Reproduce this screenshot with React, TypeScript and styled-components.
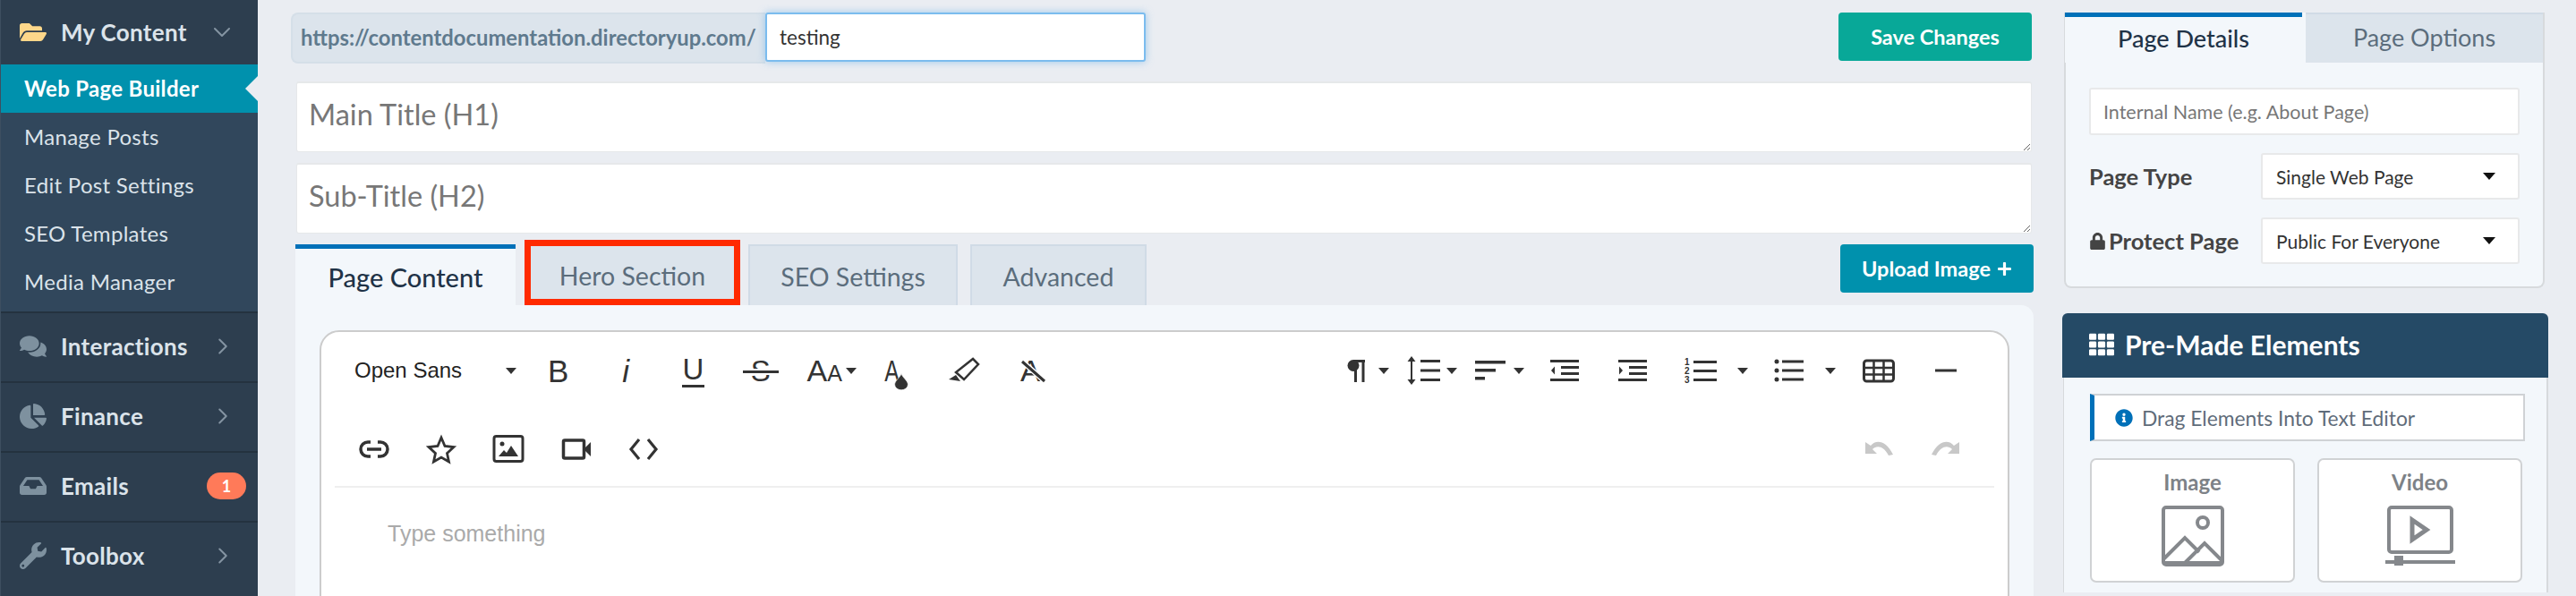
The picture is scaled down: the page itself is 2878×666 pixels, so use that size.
import React from "react";
import styled, { createGlobalStyle } from "styled-components";
import {
  FaChartPie,
  FaComments,
  FaFolderOpen,
  FaInbox,
  FaInfoCircle,
  FaLock,
  FaPlus,
  FaTh,
  FaWrench,
} from "react-icons/fa";
import { ChevronDown, ChevronRight } from "lucide-react";

const GlobalStyle = createGlobalStyle`
  html, body {
    margin: 0;
    padding: 0;
    height: 666px;
    overflow: hidden;
    background: #eaedf2;
  }
  * {
    box-sizing: border-box;
  }
`;

const UI = `"Lato", "Open Sans", sans-serif`;
const EDITOR = `"Liberation Sans", Arial, sans-serif`;

const App = () => {
  return (
    <>
      <GlobalStyle />
      <Page>
        <Sidebar>
          <NavHead>
            <NavIcon $open><FaFolderOpen /></NavIcon>
            <NavLabel>My Content</NavLabel>
            <NavChevron><ChevronDown size={32} strokeWidth={1.5} /></NavChevron>
          </NavHead>
          <SubNav>
            <SubItem $active>Web Page Builder</SubItem>
            <SubItem>Manage Posts</SubItem>
            <SubItem>Edit Post Settings</SubItem>
            <SubItem>SEO Templates</SubItem>
            <SubItem>Media Manager</SubItem>
          </SubNav>
          {navItems.map((item) => (
            <NavItem key={item.label}>
              <NavIcon>{item.icon}</NavIcon>
              <NavLabel>{item.label}</NavLabel>
              {item.badge ? (
                <Badge>{item.badge}</Badge>
              ) : (
                <NavChevron><ChevronRight size={30} strokeWidth={1.6} /></NavChevron>
              )}
            </NavItem>
          ))}
        </Sidebar>

        <Center>
          <TopRow>
            <UrlGroup>
              <UrlPrefix>https://contentdocumentation.directoryup.com/</UrlPrefix>
              <UrlInput value="testing" readOnly />
            </UrlGroup>
            <SaveButton>Save Changes</SaveButton>
          </TopRow>
          <TitleArea placeholder="Main Title (H1)" />
          <TitleArea placeholder="Sub-Title (H2)" />
          <TabRow>
            <Tab $active $w={246}>Page Content</Tab>
            <Tab $marked $w={241}>Hero Section</Tab>
            <Tab $w={234}>SEO Settings</Tab>
            <Tab $w={197}>Advanced</Tab>
            <UploadButton>Upload Image <FaPlus size={17} /></UploadButton>
          </TabRow>
          <ContentPanel>
            <Editor>
              <Toolbar>
                <ToolRow>
                  <FontPicker>
                    <span>Open Sans</span>
                    <Caret />
                  </FontPicker>
                  <ToolBtn><LetterB>B</LetterB></ToolBtn>
                  <ToolBtn><LetterI>i</LetterI></ToolBtn>
                  <ToolBtn><LetterU>U</LetterU></ToolBtn>
                  <ToolBtn><LetterS>S</LetterS></ToolBtn>
                  <ToolBtn $pad={14}>
                    <SizeGlyph>A<small>A</small></SizeGlyph>
                    <Caret $gap={4} />
                  </ToolBtn>
                  <ToolBtn>
                    <ColorGlyph>
                      <span>A</span>
                      <svg width="16" height="19" viewBox="0 0 15 18">
                        <path d="M7.500 0.500 C9 5 14.500 8 14.500 12 A7 5.800 0 0 1 0.500 12 C0.500 8 6 5 7.500 0.500Z" fill="#333" stroke="#fff" strokeWidth="0.600" />
                      </svg>
                    </ColorGlyph>
                  </ToolBtn>
                  <ToolBtn>
                    <Icon>
                      <path d="M29 7 L35 13 L19 30 L10 22Z" fill="none" stroke="#333" strokeWidth="2.500" />
                      <path d="M2 30 L10 25 L15 32Z" fill="#333" />
                    </Icon>
                  </ToolBtn>
                  <ToolBtn>
                    <ClearGlyph>
                      A
                      <svg width="30" height="32" viewBox="0 0 30 32">
                        <path d="M0 3 L26 26" stroke="#fff" strokeWidth="6" />
                        <path d="M2 5 L27 27" stroke="#333" strokeWidth="3" />
                      </svg>
                    </ClearGlyph>
                  </ToolBtn>
                  <Spacer />
                  <ToolBtn $pad={12}>
                    <Icon>
                      <circle cx="16" cy="14.500" r="6.500" fill="#333" />
                      <path d="M16 8 H29 V11 H16Z M17 8 H20 V33 H17Z M25.500 8 H28.500 V33 H25.500Z" fill="#333" />
                    </Icon>
                    <Caret />
                  </ToolBtn>
                  <ToolBtn $pad={12}>
                    <Icon>
                      <path d="M4 8 H6 V32 H4Z" fill="#333" />
                      <path d="M5 4 L9.500 10 H0.500Z M5 36 L9.500 30 H0.500Z" fill="#333" />
                      <path d="M15 8 H37 V11 H15Z M15 18.500 H37 V21.500 H15Z M15 29 H37 V32 H15Z" fill="#333" />
                    </Icon>
                    <Caret />
                  </ToolBtn>
                  <ToolBtn $pad={12}>
                    <Icon><path d="M1 9 H35 V12.500 H1Z M1 18 H24 V21.500 H1Z M1 27 H12 V30.500 H1Z" fill="#333" /></Icon>
                    <Caret />
                  </ToolBtn>
                  <ToolBtn>
                    <Icon><path d="M2 8 H34 V11 H2Z M2 29 H34 V32 H2Z M14 15 H34 V18 H14Z M14 22 H34 V25 H14Z M7 15.500 V24.500 L3 20Z" fill="#333" /></Icon>
                  </ToolBtn>
                  <ToolBtn>
                    <Icon><path d="M2 8 H34 V11 H2Z M2 29 H34 V32 H2Z M14 15 H34 V18 H14Z M14 22 H34 V25 H14Z M3 15.500 V24.500 L7 20Z" fill="#333" /></Icon>
                  </ToolBtn>
                  <ToolBtn $w={100} $pad={20}>
                    <Icon>
                      <path d="M11 9 H37 V12 H11Z M11 19 H37 V22 H11Z M11 29 H37 V32 H11Z" fill="#333" />
                      <text x="1" y="14" fontSize="10" fontWeight="700" fill="#333" fontFamily={EDITOR}>1</text>
                      <text x="1" y="24" fontSize="10" fontWeight="700" fill="#333" fontFamily={EDITOR}>2</text>
                      <text x="1" y="34" fontSize="10" fontWeight="700" fill="#333" fontFamily={EDITOR}>3</text>
                    </Icon>
                    <Caret $gap={24} />
                  </ToolBtn>
                  <ToolBtn $w={100} $pad={18}>
                    <Icon>
                      <circle cx="6" cy="10" r="2.500" fill="#333" />
                      <circle cx="6" cy="20" r="2.500" fill="#333" />
                      <circle cx="6" cy="30" r="2.500" fill="#333" />
                      <path d="M12 8.500 H36 V11.500 H12Z M12 18.500 H36 V21.500 H12Z M12 28.500 H36 V31.500 H12Z" fill="#333" />
                    </Icon>
                    <Caret $gap={24} />
                  </ToolBtn>
                  <ToolBtn>
                    <Icon>
                      <rect x="1.500" y="9" width="33" height="23" rx="3" fill="none" stroke="#333" strokeWidth="3" />
                      <path d="M1.500 17 H34.500 M1.500 24.500 H34.500 M12.500 9 V32 M23.500 9 V32" stroke="#333" strokeWidth="2.500" />
                    </Icon>
                  </ToolBtn>
                  <ToolBtn>
                    <Icon><path d="M6 18.500 H30 V21.500 H6Z" fill="#333" /></Icon>
                  </ToolBtn>
                  <EndGap />
                </ToolRow>
                <ToolRow $second>
                  <ToolBtn>
                    <Icon>
                      <path d="M14 12 H11 A8 8 0 0 0 11 28 H14 M22 12 H25 A8 8 0 0 1 25 28 H22" fill="none" stroke="#333" strokeWidth="3.500" />
                      <path d="M10 20 H26" stroke="#333" strokeWidth="3.500" />
                    </Icon>
                  </ToolBtn>
                  <ToolBtn>
                    <Icon><path d="M18 7 L22 16.500 L32 17.500 L24.500 24.500 L26.500 34 L18 29 L9.500 34 L11.500 24.500 L4 17.500 L14 16.500Z" fill="none" stroke="#333" strokeWidth="2.800" /></Icon>
                  </ToolBtn>
                  <ToolBtn>
                    <Icon>
                      <rect x="2" y="5.500" width="32" height="28" rx="2.500" fill="none" stroke="#333" strokeWidth="3" />
                      <circle cx="11" cy="14" r="2.500" fill="#333" />
                      <path d="M7 28 L13 21 L16 24 L21 16 L29 28Z" fill="#333" />
                    </Icon>
                  </ToolBtn>
                  <ToolBtn>
                    <Icon>
                      <rect x="3.500" y="10" width="23" height="20" rx="1.500" fill="none" stroke="#333" strokeWidth="3.500" />
                      <path d="M26 20 L34 12 V28Z" fill="#333" />
                    </Icon>
                  </ToolBtn>
                  <ToolBtn>
                    <Icon><path d="M13 9 L4 20 L13 31 M23 9 L32 20 L23 31" fill="none" stroke="#333" strokeWidth="3.200" /></Icon>
                  </ToolBtn>
                  <Spacer />
                  <ToolBtn>
                    <Icon><path d="M3 12 V25 H16 L11 20 C16 15.500 23 16 29 27 L34 26 C26 10 15 9 9 16Z" fill="#c8c8c8" /></Icon>
                  </ToolBtn>
                  <ToolBtn>
                    <Icon><path d="M33 12 V25 H20 L25 20 C20 15.500 13 16 7 27 L2 26 C10 10 21 9 27 16Z" fill="#c8c8c8" /></Icon>
                  </ToolBtn>
                  <EndGap />
                </ToolRow>
              </Toolbar>
              <EditorBody>Type something</EditorBody>
            </Editor>
          </ContentPanel>
        </Center>

        <Aside>
          <DetailsCard>
            <SideTabs>
              <SideTab $active>Page Details</SideTab>
              <SideTab>Page Options</SideTab>
            </SideTabs>
            <DetailsBody>
              <NameInput placeholder="Internal Name (e.g. About Page)" />
              <FieldRow>
                <FieldLabel>Page Type</FieldLabel>
                <SelectBox>Single Web Page<SelectCaret /></SelectBox>
              </FieldRow>
              <FieldRow>
                <FieldLabel><FaLock size={19} /> Protect Page</FieldLabel>
                <SelectBox>Public For Everyone<SelectCaret /></SelectBox>
              </FieldRow>
            </DetailsBody>
          </DetailsCard>
          <ElementsHead><FaTh size={28} /> Pre-Made Elements</ElementsHead>
          <ElementsBody>
            <Hint>
              <FaInfoCircle size={20} color="#0070b8" />
              <span>Drag Elements Into Text Editor</span>
            </Hint>
            <ElementGrid>
              <ElementCard>
                <span>Image</span>
                <svg width="70" height="68" viewBox="0 0 70 68" fill="none" stroke="#85888c" strokeWidth="4">
                  <rect x="2" y="2" width="66" height="64" rx="3" />
                  <circle cx="46" cy="19" r="6" />
                  <path d="M2 60 L26 36 L42 52 M24 66 L48 42 L68 62 M4 64 H66" />
                </svg>
              </ElementCard>
              <ElementCard>
                <span>Video</span>
                <svg width="78" height="68" viewBox="0 0 78 68" fill="none" stroke="#85888c" strokeWidth="4">
                  <rect x="4" y="2" width="70" height="50" rx="3" />
                  <path d="M30 16 L46 27 L30 38Z" strokeWidth="5" />
                  <path d="M0 63 H78" />
                  <path d="M10 56 H20 V67 H10Z" fill="#85888c" stroke="none" />
                </svg>
              </ElementCard>
            </ElementGrid>
          </ElementsBody>
        </Aside>
      </Page>
    </>
  );
};

const navItems = [
  { label: "Interactions", icon: <FaComments /> },
  { label: "Finance", icon: <FaChartPie /> },
  { label: "Emails", icon: <FaInbox />, badge: "1" },
  { label: "Toolbox", icon: <FaWrench /> },
];

const Page = styled.div`
  display: flex;
  width: 2878px;
  height: 666px;
  overflow: hidden;
  background: #eaedf2;
  font-family: ${UI};
`;

const Sidebar = styled.nav`
  width: 288px;
  flex: none;
  background: #2d3e4f;
  border-left: 1px solid #3d4f60;
`;

const NavHead = styled.div`
  display: flex;
  align-items: center;
  height: 72px;
  padding: 0 24px 0 21px;
`;

const NavItem = styled(NavHead)`
  height: 78px;
  padding-bottom: 3px;
  border-top: 2px solid #24323f;
`;

const NavIcon = styled.span<{ $open?: boolean }>`
  display: flex;
  width: 46px;
  font-size: 30px;
  color: ${(p) => (p.$open ? "#fdd78a" : "#7e919f")};
`;

const NavLabel = styled.span`
  flex: 1;
  font-size: 26px;
  font-weight: 700;
  letter-spacing: 0.3px;
  color: #dbe3ea;
`;

const NavChevron = styled.span`
  display: flex;
  color: #8494a2;
`;

const Badge = styled.span`
  width: 44px;
  height: 30px;
  margin-right: -11px;
  border-radius: 15px;
  background: #ff7a59;
  color: #fff;
  font-size: 18px;
  font-weight: 700;
  line-height: 30px;
  text-align: center;
`;

const SubNav = styled.div`
  background: #31475c;
  padding-bottom: 6px;
`;

const SubItem = styled.div<{ $active?: boolean }>`
  position: relative;
  height: 54px;
  padding-left: 26px;
  font-size: 24px;
  letter-spacing: 0.3px;
  line-height: 54px;
  font-weight: ${(p) => (p.$active ? 700 : 400)};
  color: ${(p) => (p.$active ? "#fff" : "#dbe3ea")};
  background: ${(p) => (p.$active ? "#0091ad" : "transparent")};

  ${(p) =>
    p.$active &&
    `
    &::after {
      content: "";
      position: absolute;
      right: 0;
      top: 13px;
      border: 14px solid transparent;
      border-left: 0;
      border-right: 14px solid #eaedf2;
    }
  `}
`;

const Center = styled.main`
  width: 1947px;
  flex: none;
  margin-left: 37px;
  padding-top: 14px;
`;

const TopRow = styled.div`
  display: flex;
  justify-content: space-between;
  align-items: flex-start;
  height: 77px;
  padding-right: 2px;
`;

const UrlGroup = styled.div`
  display: flex;
`;

const UrlPrefix = styled.div`
  width: 530px;
  height: 57px;
  padding-left: 9px;
  border: 2px solid #d5dfe8;
  border-right: 0;
  border-radius: 8px 0 0 8px;
  background: #dce4ec;
  color: #5f7a8e;
  font-size: 23.8px;
  font-weight: 700;
  line-height: 52px;
  white-space: nowrap;
`;

const UrlInput = styled.input`
  width: 425px;
  height: 55px;
  padding: 0 14px;
  border: 2px solid #7bbcee;
  border-radius: 3px;
  outline: 0;
  background: #fff;
  box-shadow: 0 0 8px rgba(102, 175, 233, 0.6);
  color: #333;
  font-family: ${UI};
  font-size: 22.5px;
`;

const SaveButton = styled.button`
  width: 216px;
  height: 54px;
  border: 0;
  border-radius: 4px;
  background: #08a898;
  color: #fff;
  font-family: ${UI};
  font-size: 23.5px;
  font-weight: 700;
`;

const TitleArea = styled.textarea`
  display: block;
  width: 1939px;
  height: 79px;
  margin: 0 0 12px 6px;
  padding: 17px 13px;
  border: 1px solid #e6e8ea;
  border-top-width: 2px;
  border-radius: 3px;
  outline: 0;
  background: #fff;
  font-family: ${UI};
  font-size: 32.5px;
  line-height: 36px;
  color: #333;

  &::placeholder {
    color: #777;
  }
`;

const TabRow = styled.div`
  display: flex;
  align-items: flex-end;
  height: 68px;
  margin: 2px 0 0 5px;
`;

const Tab = styled.div<{ $w: number; $active?: boolean; $marked?: boolean }>`
  display: flex;
  align-items: center;
  justify-content: center;
  flex: none;
  width: ${(p) => p.$w}px;
  height: ${(p) => (p.$marked ? 73 : 68)}px;
  margin-right: ${(p) => (p.$active ? 10 : p.$marked ? 9 : 14)}px;
  padding-top: 2px;
  border: 2px solid #d0dbe6;
  border-bottom: 0;
  background: #dce4ec;
  color: #5b6d7c;
  font-size: 28.5px;

  ${(p) =>
    p.$active &&
    `
    padding-top: 0;
    border: 0;
    border-top: 5px solid #0070b8;
    background: #f3f7fb;
    color: #1f3347;
    font-size: 29px;
    font-weight: 500;
  `}

  ${(p) =>
    p.$marked &&
    `
    padding-top: 6px;
    border: 7px solid #ff2a00;
  `}
`;

const UploadButton = styled.button`
  display: flex;
  align-items: center;
  justify-content: center;
  gap: 7px;
  align-self: flex-start;
  width: 216px;
  height: 54px;
  margin-left: auto;
  border: 0;
  border-radius: 4px;
  background: #0091ad;
  color: #fff;
  font-family: ${UI};
  font-size: 23.5px;
  font-weight: 700;
`;

const ContentPanel = styled.div`
  height: 330px;
  margin-left: 5px;
  padding: 28px 27px 0;
  border-radius: 0 14px 0 0;
  background: #f3f7fb;
`;

const Editor = styled.div`
  height: 400px;
  border: 2px solid #cccccc;
  border-radius: 22px 22px 0 0;
  background: #fff;
`;

const Toolbar = styled.div`
  display: flex;
  flex-direction: column;
  gap: 6px;
  margin: 0 15px;
  padding-top: 2px;
  border-bottom: 2px solid #efefef;
`;

const ToolRow = styled.div<{ $second?: boolean }>`
  display: flex;
  align-items: center;
  height: 82px;
  padding-left: ${(p) => (p.$second ? 6 : 0)}px;
`;

const FontPicker = styled.div`
  display: flex;
  align-items: center;
  justify-content: space-between;
  flex: none;
  width: 212px;
  padding: 0 9px 0 22px;
  color: #222;
  font-family: ${EDITOR};
  font-size: 24px;
`;

const ToolBtn = styled.div<{ $w?: number; $pad?: number }>`
  display: flex;
  align-items: center;
  justify-content: ${(p) => (p.$pad ? "flex-start" : "center")};
  flex: none;
  width: ${(p) => p.$w ?? 75.4}px;
  height: 56px;
  padding-left: ${(p) => p.$pad ?? 0}px;
  color: #333;
  font-family: ${EDITOR};
`;

const Icon = ({ children }: { children: React.ReactNode }) => (
  <svg width="36" height="40" viewBox="0 0 36 40" style={{ overflow: "visible" }}>
    {children}
  </svg>
);

const Caret = styled.i<{ $gap?: number }>`
  flex: none;
  width: 0;
  height: 0;
  margin-left: ${(p) => p.$gap ?? 8}px;
  border-left: 6px solid transparent;
  border-right: 6px solid transparent;
  border-top: 7px solid #333;
`;

const LetterB = styled.span`
  font-size: 35px;
  line-height: 1;
`;

const LetterI = styled.span`
  font-size: 35px;
  font-style: italic;
  line-height: 1;
`;

const LetterU = styled.span`
  font-size: 33px;
  line-height: 1;
  border-bottom: 3px solid #333;
  padding: 0 1px 1px;
`;

const LetterS = styled.span`
  position: relative;
  font-size: 33px;
  line-height: 1;

  &::after {
    content: "";
    position: absolute;
    left: -9px;
    right: -9px;
    top: 16px;
    height: 3px;
    background: #333;
    box-shadow: 0 -2px 0 #fff, 0 2px 0 #fff;
  }
`;

const SizeGlyph = styled.span`
  font-size: 34px;
  line-height: 1;

  small {
    font-size: 25px;
  }
`;

const ColorGlyph = styled.span`
  position: relative;
  margin-right: 8px;
  font-size: 34px;
  line-height: 1;

  span {
    display: inline-block;
    transform: scaleX(0.72);
  }

  svg {
    position: absolute;
    left: 14px;
    top: 20px;
  }
`;

const ClearGlyph = styled.span`
  position: relative;
  font-size: 34px;
  line-height: 1;

  svg {
    position: absolute;
    left: 0;
    top: 2px;
  }
`;

const Spacer = styled.div`
  flex: 1;
`;

const EndGap = styled.div`
  flex: none;
  width: 16px;
`;

const EditorBody = styled.div`
  padding: 37px 74px;
  color: #aaaaaa;
  font-family: ${EDITOR};
  font-size: 25px;
`;

const Aside = styled.aside`
  width: 543px;
  flex: none;
  margin-left: 32px;
  padding-top: 14px;
`;

const DetailsCard = styled.div`
  width: 537px;
  height: 308px;
  margin-left: 2px;
  border: 2px solid #d7dadd;
  border-top: 0;
  border-radius: 0 0 8px 8px;
  background: #f3f7fb;
`;

const SideTabs = styled.div`
  display: flex;
  gap: 4px;
  margin-left: -1px;
`;

const SideTab = styled.div<{ $active?: boolean }>`
  flex: 1;
  height: 56px;
  border-top: ${(p) => (p.$active ? "5px solid #0070b8" : "2px solid #d0dbe6")};
  background: ${(p) => (p.$active ? "#f3f7fb" : "#dce4ec")};
  color: ${(p) => (p.$active ? "#1f3347" : "#5b6d7c")};
  font-size: 27px;
  font-weight: ${(p) => (p.$active ? 500 : 400)};
  line-height: ${(p) => (p.$active ? 48 : 52)}px;
  text-align: center;
`;

const DetailsBody = styled.div`
  padding: 28px 26px 0 26px;
`;

const NameInput = styled.input`
  display: block;
  width: 100%;
  height: 53px;
  margin-bottom: 20px;
  padding: 0 14px;
  border: 2px solid #e8e9ea;
  border-radius: 3px;
  outline: 0;
  background: #fff;
  font-family: ${UI};
  font-size: 21.5px;

  &::placeholder {
    color: #777;
  }
`;

const FieldRow = styled.div`
  display: flex;
  align-items: center;
  justify-content: space-between;
  margin-bottom: 20px;
`;

const FieldLabel = styled.label`
  display: flex;
  align-items: center;
  gap: 3px;
  color: #444;
  font-size: 25.5px;
  font-weight: 700;
`;

const SelectBox = styled.div`
  display: flex;
  align-items: center;
  justify-content: space-between;
  width: 289px;
  height: 52px;
  padding: 0 25px 0 15px;
  border: 2px solid #e8e9ea;
  border-radius: 3px;
  background: #fff;
  color: #333;
  font-size: 21px;
`;

const SelectCaret = styled.i`
  border-left: 7px solid transparent;
  border-right: 7px solid transparent;
  border-top: 8px solid #111;
`;

const ElementsHead = styled.div`
  display: flex;
  align-items: center;
  gap: 12px;
  height: 72px;
  margin-top: 28px;
  padding: 0 0 3px 30px;
  border-radius: 6px 6px 0 0;
  background: #254a66;
  color: #fff;
  font-size: 30px;
  font-weight: 700;
`;

const ElementsBody = styled.div`
  height: 240px;
  margin-left: 1px;
  padding: 18px 27px 0 29px;
  border-left: 1px solid #d7dadd;
  border-right: 2px solid #d7dadd;
  background: #f3f7fb;
`;

const Hint = styled.div`
  display: flex;
  align-items: center;
  gap: 10px;
  width: 486px;
  height: 53px;
  padding-left: 23px;
  border: 2px solid #cfd2d5;
  border-left: 5px solid #0070b8;
  background: #fff;
  color: #5f6c7a;
  font-size: 22.8px;
`;

const ElementGrid = styled.div`
  display: flex;
  gap: 25px;
  margin-top: 19px;
`;

const ElementCard = styled.div`
  display: flex;
  flex-direction: column;
  align-items: center;
  gap: 12px;
  width: 229px;
  height: 139px;
  padding-top: 10px;
  border: 2px solid #d0d2d4;
  border-radius: 7px;
  background: #fff;
  color: #7d8287;
  font-size: 24px;
  font-weight: 700;
`;

export default App;
